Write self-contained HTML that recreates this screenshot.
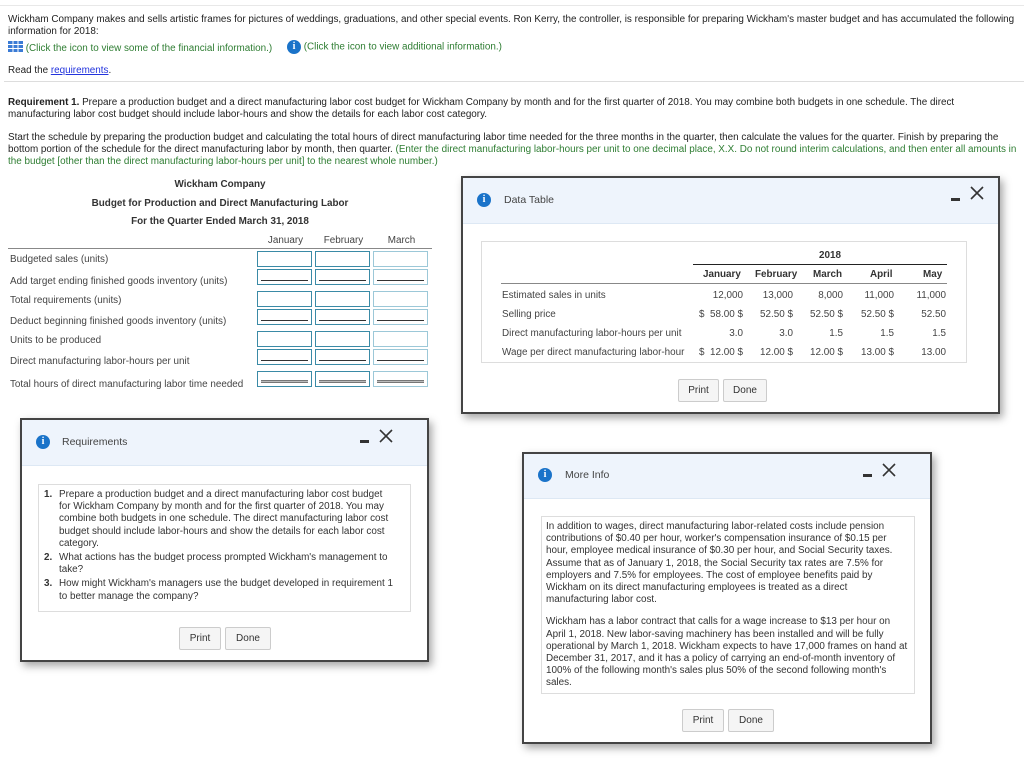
<!DOCTYPE html>
<html><head><meta charset="utf-8"><style>
*{box-sizing:border-box;margin:0;padding:0}
body{width:1024px;height:776px;position:relative;background:#fff;font-family:"Liberation Sans",Arial,sans-serif;font-size:9.9px;color:#222;overflow:hidden}
.a{position:absolute;white-space:nowrap}
.g{color:#2e7d32}
.hr{position:absolute;height:1px;background:#ddd}
.ic{display:inline-block;width:14px;height:14px;border-radius:50%;background:#1a73c9;color:#fff;font:bold 10px "Liberation Serif",serif;text-align:center;line-height:14px;vertical-align:middle}
.box{position:absolute;width:55px;height:16px;border:1px solid #3a8aa6}
.box.l{border-color:#9cc8d8}
.ul{position:absolute;left:3px;right:3px;bottom:3px;height:1px;background:#333}
.dl{position:absolute;left:3px;right:3px;bottom:3px;height:3px;border-top:1px solid #777;border-bottom:1px solid #777;background:#bbb}
.m{position:absolute;border:2px solid #444;background:#fff;box-shadow:3px 4px 8px rgba(0,0,0,.35)}
.mh{position:absolute;left:0;right:0;top:0;background:#eef4fc;border-bottom:1px solid #dde8f4}
.mt{position:absolute;font-size:10.5px;color:#444}
.x{position:absolute}
.mn{position:absolute;width:9px;height:3px;background:#333}
.ib{position:absolute;border:1px solid #ddd}
.btn{position:absolute;height:23px;border:1px solid #ccc;background:#f5f5f5;border-radius:2px;font-size:10px;color:#333;text-align:center;line-height:21px}
</style></head><body>
<div class="hr" style="left:0;right:0;top:5px;background:#e8e8e8"></div>
<div class="a" style="left:8px;top:14px;line-height:12px;white-space:normal;width:1014px">Wickham Company makes and sells artistic frames for pictures of weddings, graduations, and other special events. Ron Kerry, the controller, is responsible for preparing Wickham's master budget and has accumulated the following information for 2018:</div>
<div class="a g" style="left:8px;top:41px"><svg width="15" height="11" style="vertical-align:-1px"><rect x="0" y="0" width="15" height="11" fill="#3a7bd5"/><g stroke="#fff" stroke-width="1"><line x1="0" y1="3.5" x2="15" y2="3.5"/><line x1="0" y1="7.5" x2="15" y2="7.5"/><line x1="5" y1="0" x2="5" y2="11"/><line x1="10" y1="0" x2="10" y2="11"/></g></svg> (Click the icon to view some of the financial information.)</div>
<div class="a g" style="left:287px;top:40px"><span class="ic">i</span> (Click the icon to view additional information.)</div>
<div class="a" style="left:8px;top:65px">Read the <span style="color:#2233dd;text-decoration:underline">requirements</span>.</div>
<div class="hr" style="left:4px;right:0;top:81px"></div>
<div class="a" style="left:8px;top:97px;line-height:12px;white-space:normal;width:1000px"><b>Requirement 1.</b> Prepare a production budget and a direct manufacturing labor cost budget for Wickham Company by month and for the first quarter of 2018. You may combine both budgets in one schedule. The direct manufacturing labor cost budget should include labor-hours and show the details for each labor cost category.</div>
<div class="a" style="left:8px;top:132px;line-height:12px;white-space:normal;width:1016px">Start the schedule by preparing the production budget and calculating the total hours of direct manufacturing labor time needed for the three months in the quarter, then calculate the values for the quarter. Finish by preparing the bottom portion of the schedule for the direct manufacturing labor by month, then quarter. <span class="g">(Enter the direct manufacturing labor-hours per unit to one decimal place, X.X. Do not round interim calculations, and then enter all amounts in the budget [other than the direct manufacturing labor-hours per unit] to the nearest whole number.)</span></div>

<div class="a" style="left:0;width:440px;text-align:center;top:179px;font-weight:bold;color:#333">Wickham Company</div>
<div class="a" style="left:0;width:440px;text-align:center;top:198px;font-weight:bold;color:#333">Budget for Production and Direct Manufacturing Labor</div>
<div class="a" style="left:0;width:440px;text-align:center;top:216px;font-weight:bold;color:#333">For the Quarter Ended March 31, 2018</div>
<div class="a" style="left:257px;width:57px;text-align:center;top:235px;color:#444">January</div>
<div class="a" style="left:315px;width:57px;text-align:center;top:235px;color:#444">February</div>
<div class="a" style="left:373px;width:57px;text-align:center;top:235px;color:#444">March</div>
<div class="hr" style="left:8px;width:424px;top:248px;background:#888"></div>
<div class="a" style="left:10px;top:254px;color:#444">Budgeted sales (units)</div>
<div class="a" style="left:10px;top:276px;color:#444">Add target ending finished goods inventory (units)</div>
<div class="a" style="left:10px;top:295px;color:#444">Total requirements (units)</div>
<div class="a" style="left:10px;top:316px;color:#444">Deduct beginning finished goods inventory (units)</div>
<div class="a" style="left:10px;top:335px;color:#444">Units to be produced</div>
<div class="a" style="left:10px;top:356px;color:#444">Direct manufacturing labor-hours per unit</div>
<div class="a" style="left:10px;top:379px;color:#444">Total hours of direct manufacturing labor time needed</div>

<div class="box" style="left:257px;top:251px"></div><div class="box" style="left:315px;top:251px"></div><div class="box l" style="left:373px;top:251px"></div>
<div class="box" style="left:257px;top:269px"><div class="ul"></div></div><div class="box" style="left:315px;top:269px"><div class="ul"></div></div><div class="box l" style="left:373px;top:269px"><div class="ul"></div></div>
<div class="box" style="left:257px;top:291px"></div><div class="box" style="left:315px;top:291px"></div><div class="box l" style="left:373px;top:291px"></div>
<div class="box" style="left:257px;top:309px"><div class="ul"></div></div><div class="box" style="left:315px;top:309px"><div class="ul"></div></div><div class="box l" style="left:373px;top:309px"><div class="ul"></div></div>
<div class="box" style="left:257px;top:331px"></div><div class="box" style="left:315px;top:331px"></div><div class="box l" style="left:373px;top:331px"></div>
<div class="box" style="left:257px;top:349px"><div class="ul"></div></div><div class="box" style="left:315px;top:349px"><div class="ul"></div></div><div class="box l" style="left:373px;top:349px"><div class="ul"></div></div>
<div class="box" style="left:257px;top:371px"><div class="dl"></div></div><div class="box" style="left:315px;top:371px"><div class="dl"></div></div><div class="box l" style="left:373px;top:371px"><div class="dl"></div></div>

<!-- Data Table -->
<div class="m" style="left:461px;top:176px;width:539px;height:238px">
<div class="mh" style="height:46px"></div>
<span class="ic" style="position:absolute;left:14px;top:15px">i</span>
<div class="mt" style="left:41px;top:16px">Data Table</div>
<div class="mn" style="left:488px;top:20px"></div>
<svg class="x" style="left:507px;top:8px" width="14" height="14"><path d="M1 1L13 13M13 1L1 13" stroke="#333" stroke-width="1.6"/></svg>
<div class="ib" style="left:18px;top:63px;width:486px;height:122px"></div>
<div class="a" style="left:356px;top:72px;font-weight:bold;color:#333">2018</div>
<div class="hr" style="left:230px;width:254px;top:86px;background:#222"></div>
<div class="a" style="left:240px;top:91px;font-weight:bold;color:#333">January</div>
<div class="a" style="left:292px;top:91px;font-weight:bold;color:#333">February</div>
<div class="a" style="left:350px;top:91px;font-weight:bold;color:#333">March</div>
<div class="a" style="left:407px;top:91px;font-weight:bold;color:#333">April</div>
<div class="a" style="left:460px;top:91px;font-weight:bold;color:#333">May</div>
<div class="hr" style="left:38px;width:446px;top:105px;background:#888"></div>
<div class="a" style="left:39px;top:108px;color:#444;line-height:19px">Estimated sales in units<br>Selling price<br>Direct manufacturing labor-hours per unit<br>Wage per direct manufacturing labor-hour</div>
<div class="a" style="left:236px;top:108px;color:#444;line-height:19px"><br>$<br><br>$</div>
<div class="a" style="left:220px;width:60px;text-align:right;top:108px;color:#444;line-height:19px">12,000<br>58.00 $<br>3.0<br>12.00 $</div>
<div class="a" style="left:270px;width:60px;text-align:right;top:108px;color:#444;line-height:19px">13,000<br>52.50 $<br>3.0<br>12.00 $</div>
<div class="a" style="left:320px;width:60px;text-align:right;top:108px;color:#444;line-height:19px">8,000<br>52.50 $<br>1.5<br>12.00 $</div>
<div class="a" style="left:371px;width:60px;text-align:right;top:108px;color:#444;line-height:19px">11,000<br>52.50 $<br>1.5<br>13.00 $</div>
<div class="a" style="left:423px;width:60px;text-align:right;top:108px;color:#444;line-height:19px">11,000<br>52.50<br>1.5<br>13.00</div>
<div class="btn" style="left:215px;top:201px;width:41px">Print</div>
<div class="btn" style="left:260px;top:201px;width:44px">Done</div>
</div>

<!-- Requirements -->
<div class="m" style="left:20px;top:418px;width:409px;height:244px">
<div class="mh" style="height:46px"></div>
<span class="ic" style="position:absolute;left:14px;top:15px">i</span>
<div class="mt" style="left:40px;top:16px">Requirements</div>
<div class="mn" style="left:338px;top:20px"></div>
<svg class="x" style="left:357px;top:9px" width="14" height="14"><path d="M1 1L13 13M13 1L1 13" stroke="#333" stroke-width="1.6"/></svg>
<div class="ib" style="left:16px;top:64px;width:373px;height:128px"></div>
<div class="a" style="left:22px;top:69px;line-height:12.2px;white-space:normal;width:350px;color:#333">
<div style="display:flex"><b style="width:15px;flex:none">1.</b><span>Prepare a production budget and a direct manufacturing labor cost budget for Wickham Company by month and for the first quarter of 2018. You may combine both budgets in one schedule. The direct manufacturing labor cost budget should include labor-hours and show the details for each labor cost category.</span></div>
<div style="display:flex;margin-top:2px"><b style="width:15px;flex:none">2.</b><span>What actions has the budget process prompted Wickham's management to take?</span></div>
<div style="display:flex;margin-top:2px"><b style="width:15px;flex:none">3.</b><span>How might Wickham's managers use the budget developed in requirement 1 to better manage the company?</span></div>
</div>
<div class="btn" style="left:157px;top:207px;width:42px">Print</div>
<div class="btn" style="left:203px;top:207px;width:46px">Done</div>
</div>

<!-- More Info -->
<div class="m" style="left:522px;top:452px;width:410px;height:292px">
<div class="mh" style="height:45px"></div>
<span class="ic" style="position:absolute;left:14px;top:14px">i</span>
<div class="mt" style="left:41px;top:15px">More Info</div>
<div class="mn" style="left:339px;top:20px"></div>
<svg class="x" style="left:358px;top:9px" width="14" height="14"><path d="M1 1L13 13M13 1L1 13" stroke="#333" stroke-width="1.6"/></svg>
<div class="ib" style="left:17px;top:62px;width:374px;height:178px"></div>
<div class="a" style="left:22px;top:67px;line-height:12.2px;white-space:normal;width:365px;color:#333">In addition to wages, direct manufacturing labor-related costs include pension contributions of $0.40 per hour, worker's compensation insurance of $0.15 per hour, employee medical insurance of $0.30 per hour, and Social Security taxes. Assume that as of January 1, 2018, the Social Security tax rates are 7.5% for employers and 7.5% for employees. The cost of employee benefits paid by Wickham on its direct manufacturing employees is treated as a direct manufacturing labor cost.<div style="height:10px"></div>Wickham has a labor contract that calls for a wage increase to $13 per hour on April 1, 2018. New labor-saving machinery has been installed and will be fully operational by March 1, 2018. Wickham expects to have 17,000 frames on hand at December 31, 2017, and it has a policy of carrying an end-of-month inventory of 100% of the following month's sales plus 50% of the second following month's sales.</div>
<div class="btn" style="left:158px;top:255px;width:42px">Print</div>
<div class="btn" style="left:204px;top:255px;width:46px">Done</div>
</div>
</body></html>
